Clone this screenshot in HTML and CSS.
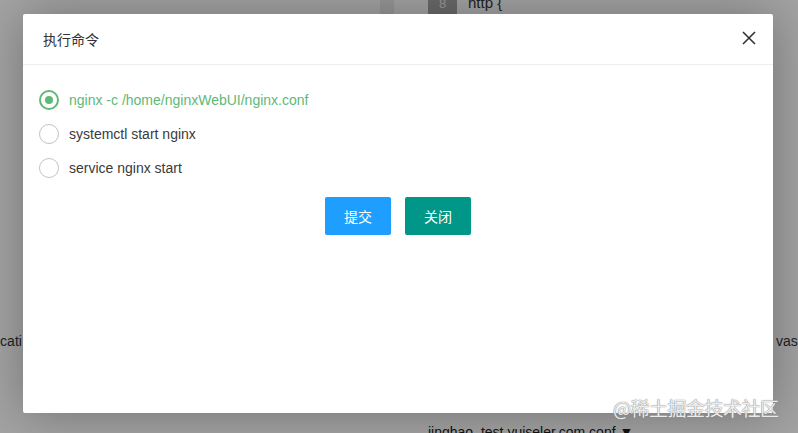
FILE: index.html
```html
<!DOCTYPE html>
<html lang="zh">
<head>
<meta charset="utf-8">
<title>执行命令</title>
<link rel="stylesheet" href="styles.css">
</head>
<body>
<div class="page">
  <div class="bg-top">
    <span class="bg-scroll"></span>
    <span class="bg-lineno">8</span>
    <span class="bg-code">http {</span>
  </div>
  <div class="bg-left">icati</div>
  <div class="bg-right">vas</div>
  <div class="bg-bottom">jinghao_test.yuiseler.com.conf ▼</div>
</div>

<div class="dialog">
  <div class="dialog-head">
    <span class="dialog-title">执行命令</span>
    <svg class="close" width="14" height="14" viewBox="0 0 14 14"><path d="M1 1L13 13M13 1L1 13" stroke="#333" stroke-width="1.6" fill="none"/></svg>
  </div>
  <div class="dialog-body">
    <label class="radio checked"><span class="dot"></span><span>nginx -c /home/nginxWebUI/nginx.conf</span></label>
    <label class="radio"><span class="dot"></span><span>systemctl start nginx</span></label>
    <label class="radio"><span class="dot"></span><span>service nginx start</span></label>
    <div class="actions">
      <button class="btn btn-blue">提交</button>
      <button class="btn btn-green">关闭</button>
    </div>
  </div>
</div>

<div class="watermark">@稀土掘金技术社区</div>
</body>
</html>
```

FILE: styles.css
```css
html, body {
  margin: 0;
  padding: 0;
}
body {
  width: 798px;
  height: 433px;
  overflow: hidden;
  position: relative;
  background: #a3a3a3;
  font-family: "Liberation Sans", "Noto Sans CJK SC", Arial, sans-serif;
  font-size: 14px;
  color: #333;
}
.page {
  position: absolute;
  inset: 0;
}
.bg-top {
  position: absolute;
  left: 380px;
  top: 0;
  height: 14px;
  display: flex;
  align-items: stretch;
}
.bg-scroll {
  width: 14px;
  background: #979797;
  margin-right: 34px;
}
.bg-lineno {
  width: 29px;
  background: #6a6a6a;
  color: #9a9a9a;
  font-size: 13px;
  line-height: 8px;
  text-align: center;
}
.bg-code {
  margin-left: 11px;
  color: #222;
  font-size: 15px;
  line-height: 6px;
}
.bg-left {
  position: absolute;
  left: -3px;
  top: 333px;
  color: #222;
  font-size: 14px;
}
.bg-right {
  position: absolute;
  left: 776px;
  top: 333px;
  color: #222;
  font-size: 14px;
}
.bg-bottom {
  position: absolute;
  left: 428px;
  top: 424px;
  color: #111;
  font-size: 14px;
}
.dialog {
  position: absolute;
  left: 23px;
  top: 14px;
  width: 750px;
  height: 399px;
  background: #fff;
  box-shadow: 1px 1px 50px rgba(0, 0, 0, 0.3);
  border-radius: 2px;
}
.dialog-head {
  height: 50px;
  border-bottom: 1px solid #eee;
  display: flex;
  align-items: center;
  justify-content: space-between;
  padding: 0 17px 0 20px;
}
.dialog-title {
  font-family: "Noto Sans CJK SC", sans-serif;
  font-size: 14px;
  color: #333;
}
.close {
  display: block;
  margin-top: -2px;
}
.dialog-body {
  padding: 18px 15px 0 16px;
}
.radio {
  display: flex;
  align-items: center;
  height: 34px;
  color: #3a3a3a;
  font-size: 14px;
}
.dot {
  width: 18px;
  height: 18px;
  border: 1px solid #c2c2c2;
  border-radius: 50%;
  margin-right: 10px;
  display: flex;
  align-items: center;
  justify-content: center;
  box-sizing: content-box;
}
.radio.checked {
  color: #5fb878;
}
.radio.checked .dot {
  border: 2px solid #5fb878;
  width: 16px;
  height: 16px;
}
.radio.checked .dot::after {
  content: "";
  width: 8px;
  height: 8px;
  border-radius: 50%;
  background: #5fb878;
}
.actions {
  display: flex;
  justify-content: center;
  gap: 14px;
  margin-top: 12px;
  padding-right: 1px;
}
.btn {
  width: 66px;
  height: 38px;
  border: none;
  border-radius: 2px;
  color: #fff;
  font-family: "Noto Sans CJK SC", sans-serif;
  font-size: 14px;
  padding: 0;
}
.btn-blue {
  background: #1e9fff;
}
.btn-green {
  background: #009688;
}
.watermark {
  position: absolute;
  left: 613px;
  top: 394px;
  font-family: "Noto Sans CJK SC", sans-serif;
  font-size: 19px;
  color: rgba(255, 255, 255, 0.85);
  text-shadow: 0 0 1px #888, 0 0 1px #888;
  letter-spacing: -0.5px;
}
```
